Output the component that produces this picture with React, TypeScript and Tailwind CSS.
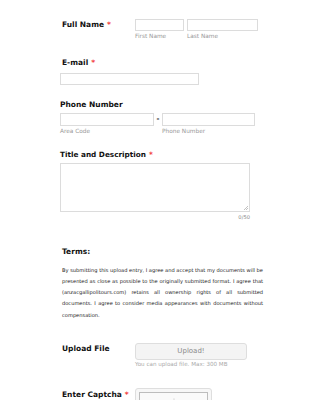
import React from "react";

const font = { fontFamily: '"DejaVu Sans", Verdana, sans-serif' };

function Star() {
  return <span className="text-[#f23a3c] ml-[3px]">*</span>;
}

export default function App() {
  return (
    <div className="w-[325px] h-[400px] overflow-hidden bg-white" style={font}>
      <div className="pl-[60px] pt-[19px] text-[#111]">
        {/* Full name */}
        <div className="flex items-start">
          <div className="w-[75px] pl-[2px] text-[7.5px] leading-[12px] font-bold">
            Full Name<Star />
          </div>
          <div className="flex gap-[3px]">
            <div className="flex flex-col">
              <div className="w-[49px] h-[12px] border border-[#dcdcdc] bg-white" />
              <div className="mt-[2px] text-[5.8px] leading-[7px] text-[#999]">First Name</div>
            </div>
            <div className="flex flex-col">
              <div className="w-[71px] h-[12px] border border-[#dcdcdc] bg-white" />
              <div className="mt-[2px] text-[5.8px] leading-[7px] text-[#999]">Last Name</div>
            </div>
          </div>
        </div>

        {/* Email */}
        <div className="mt-[17px] pl-[2px] text-[7.5px] leading-[12px] font-bold">
          E-mail<Star />
        </div>
        <div className="mt-[4px] w-[139px] h-[12px] border border-[#dcdcdc]" />

        {/* Phone */}
        <div className="mt-[14px] text-[7.5px] leading-[12px] font-bold">Phone Number</div>
        <div className="mt-[2px] flex items-start">
          <div className="flex flex-col">
            <div className="w-[94px] h-[13px] border border-[#dcdcdc]" />
            <div className="mt-[1.5px] text-[5.8px] leading-[7px] text-[#999]">Area Code</div>
          </div>
          <div className="w-[8px] text-center text-[7px] leading-[13px] font-bold">-</div>
          <div className="flex flex-col">
            <div className="w-[93px] h-[13px] border border-[#dcdcdc]" />
            <div className="mt-[1.5px] text-[5.8px] leading-[7px] text-[#999]">Phone Number</div>
          </div>
        </div>

        {/* Title */}
        <div className="mt-[14px] text-[7.3px] leading-[12px] font-bold">
          Title and Description<Star />
        </div>
        <div className="mt-[2px] w-[190px] h-[49px] border border-[#dcdcdc] relative">
          <svg className="absolute right-[1px] bottom-[1px]" width="4" height="4" viewBox="0 0 4 4">
            <path d="M4 0 L0 4 M4 2 L2 4" stroke="#999" strokeWidth="0.6" />
          </svg>
        </div>
        <div className="w-[190px] mt-[2px] text-right text-[5.2px] leading-[7px] text-[#888]">0/50</div>

        {/* Terms */}
        <div className="mt-[25px] pl-[2px] text-[7.5px] leading-[12px] font-bold">Terms:</div>
        <p className="mt-[7px] ml-[2px] w-[201px] text-justify text-[5.1px] leading-[11.3px] text-[#222]">
          By submitting this upload entry, I agree and accept that my documents will be presented as close as possible to the originally submitted format. I agree that (anzacgallipolitours.com) retains all ownership rights of all submitted documents. I agree to consider media appearances with documents without compensation.
        </p>

        {/* Upload */}
        <div className="mt-[22px] flex items-start">
          <div className="w-[75px] pl-[2px] text-[7.5px] leading-[12px] font-bold">Upload File</div>
          <div className="flex flex-col">
            <div className="w-[112px] h-[17px] rounded-[3px] border border-[#dedede] bg-[#f4f4f4] flex items-center justify-center text-[7px] text-[#8a8a8a]">
              Upload!
            </div>
            <div className="mt-[1.5px] text-[5.6px] leading-[7px] text-[#aaa] whitespace-nowrap">You can upload file. Max: 300 MB</div>
          </div>
        </div>

        {/* Captcha */}
        <div className="mt-[20px] flex items-start">
          <div className="w-[75px] pl-[2px] text-[7.5px] leading-[12px] font-bold pt-[0.5px]">
            Enter Captcha<Star />
          </div>
          <div className="w-[77px] h-[30px] rounded-[3px] border border-[#dedede] bg-[#f7f7f7] p-[3px]">
            <div className="w-full h-[22px] border border-[#bdbdbd] bg-[#fafafa] flex justify-center pt-[5px]">
              <svg width="6" height="5" viewBox="0 0 6 5">
                <circle cx="1" cy="3" r="0.6" fill="#bbb" />
                <circle cx="3" cy="1" r="0.6" fill="#bbb" />
                <circle cx="5" cy="3" r="0.6" fill="#bbb" />
              </svg>
            </div>
          </div>
        </div>
      </div>
    </div>
  );
}
